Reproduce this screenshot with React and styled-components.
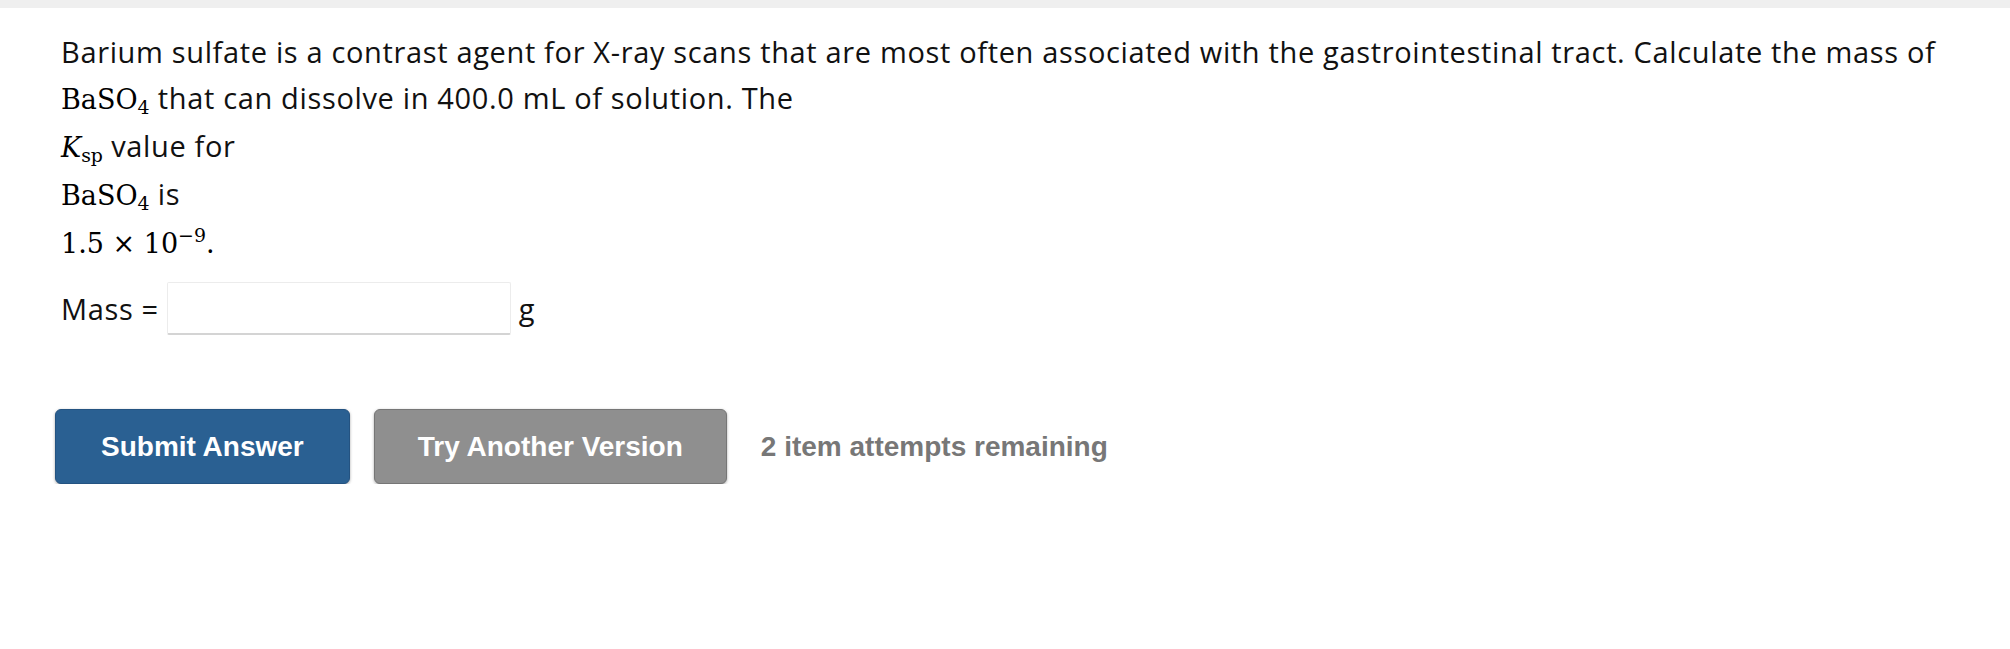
import React from 'react';
import styled, { createGlobalStyle } from 'styled-components';

const GlobalStyle = createGlobalStyle`
  html, body {
    margin: 0;
    padding: 0;
    background: #ffffff;
  }
`

const TopBar = styled.div`
  height: 8px;
  background-color: #efefef;
`

const Page = styled.div`
  padding: 21px 61px 0 61px;
  font-family: "Open Sans", "Noto Sans", sans-serif;
  font-size: 29px;
  letter-spacing: 0.65px;
  color: #111;
`

const Question = styled.div`
  line-height: 46px;
`

const Line = styled.div``

const Math = styled.span`
  font-family: "DejaVu Serif", "Liberation Serif", serif;
  font-size: 27px;
  letter-spacing: 0;
  color: #000;
`

const Italic = styled.i`
  font-style: italic;
`

const Sub = styled.sub`
  font-size: 0.7em;
  vertical-align: -0.25em;
  line-height: 0;
`

const Sup = styled.sup`
  font-size: 0.7em;
  vertical-align: 0.6em;
  line-height: 0;
`

const AnswerRow = styled.div`
  display: flex;
  align-items: center;
  margin-top: 15px;
  gap: 8px;
`

const AnswerInput = styled.input`
  width: 344px;
  height: 53px;
  box-sizing: border-box;
  border: 1px solid #ececec;
  border-bottom: 2px solid #d4d4d4;
  border-radius: 2px;
  outline: none;
  font-size: 24px;
  padding: 0 8px;
`

const ButtonRow = styled.div`
  display: flex;
  align-items: center;
  margin-top: 74px;
  margin-left: -6px;
  gap: 24px;
  letter-spacing: 0;
`

const Button = styled.button`
  height: 75px;
  padding: 0 ${props => props.pad}px;
  border-radius: 6px;
  border: 1px solid ${props => props.border};
  background-color: ${props => props.bg};
  color: #ffffff;
  font-family: "Liberation Sans", Arial, sans-serif;
  font-weight: bold;
  font-size: 28px;
  cursor: pointer;
  box-shadow: 0 1px 3px rgba(0, 0, 0, 0.35);
`

const Attempts = styled.span`
  font-family: "Liberation Sans", Arial, sans-serif;
  font-weight: bold;
  font-size: 28px;
  color: #777777;
  margin-left: 10px;
`

function BaSO4() {
  return <Math>BaSO<Sub>4</Sub></Math>
}

function App() {
  return (
    <>
      <GlobalStyle />
      <TopBar />
      <Page>
        <Question>
          <Line>
            Barium sulfate is a contrast agent for X-ray scans that are most often associated with the gastrointestinal tract. Calculate the mass of
          </Line>
          <Line><BaSO4 /> that can dissolve in 400.0 mL of solution. The</Line>
          <Line><Math><Italic>K</Italic><Sub>sp</Sub></Math> value for</Line>
          <Line><BaSO4 /> is</Line>
          <Line><Math>1.5 × 10<Sup>−9</Sup>.</Math></Line>
        </Question>
        <AnswerRow>
          <span>Mass =</span>
          <AnswerInput type="text" />
          <span>g</span>
        </AnswerRow>
        <ButtonRow>
          <Button bg="#2a6092" border="#245381" pad={45}>Submit Answer</Button>
          <Button bg="#8f8f8f" border="#767676" pad={43}>Try Another Version</Button>
          <Attempts>2 item attempts remaining</Attempts>
        </ButtonRow>
      </Page>
    </>
  );
}

export default App
